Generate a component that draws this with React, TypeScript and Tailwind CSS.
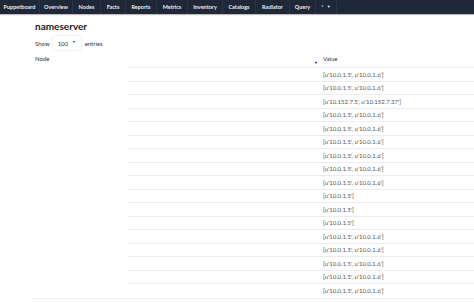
import React from 'react';

const navItems: { label: string; w: string }[] = [
    { label: 'Puppetboard', w: 'w-[40px]' },
    { label: 'Overview', w: 'w-[33px]' },
    { label: 'Nodes', w: 'w-[28px]' },
    { label: 'Facts', w: 'w-[25px]' },
    { label: 'Reports', w: 'w-[31px]' },
    { label: 'Metrics', w: 'w-[31px]' },
    { label: 'Inventory', w: 'w-[35px]' },
    { label: 'Catalogs', w: 'w-[33px]' },
    { label: 'Radiator', w: 'w-[34px]' },
    { label: 'Query', w: 'w-[26px]' },
];

const pair = "[u'10.0.1.5', u'10.0.1.6']";
const single = "[u'10.0.1.5']";

const values: string[] = [
    pair,
    pair,
    "[u'10.152.7.5', u'10.152.7.37']",
    pair,
    pair,
    pair,
    pair,
    pair,
    pair,
    single,
    single,
    single,
    pair,
    pair,
    pair,
    pair,
    pair,
];

export default function App() {
    return (
        <div className="w-[474px] h-[302px] overflow-hidden bg-white font-['Lato','Liberation_Sans',sans-serif]">
            {/* Top menu */}
            <div className="h-[14px] bg-[#1e2838] flex items-stretch shadow-[0_1px_1px_rgba(0,0,0,0.25)]">
                {navItems.map((item) => (
                    <div
                        key={item.label}
                        className={`${item.w} flex items-center justify-center text-[5.5px] font-bold text-[#e8ecf2] border-r border-[#2a3546]`}
                    >
                        {item.label}
                    </div>
                ))}
                <div className="w-[21px] flex items-center justify-center gap-[3px] text-[5.5px] text-[#e8ecf2] border-r border-[#2a3546]">
                    <span>*</span>
                    <span className="text-[4px]">▼</span>
                </div>
            </div>

            <div className="pl-[32px]">
                <h1 className="ml-[3px] mt-[5px] h-[14px] text-[10px] leading-[14px] font-bold text-[#1b1c1d]">nameserver</h1>

                <div className="ml-[3px] mt-[3px] flex items-center gap-[3px] text-[6px] text-[#333]">
                    <span>Show</span>
                    <div className="w-[28px] h-[14px] flex items-center justify-between px-[5px] bg-white rounded-[2px] shadow-[0_0_2px_rgba(0,0,0,0.18)]">
                        <span>100</span>
                        <span className="text-[3.5px]">▼</span>
                    </div>
                    <span className="ml-[1px]">entries</span>
                </div>

                {/* Table */}
                <div className="mt-[3px] border-b border-[#ececec]">
                    <div className="h-[15px] flex text-[6px] text-[#333]">
                        <div className="w-[96px] pl-[3px] pt-[1px]">Node</div>
                        <div className="flex-1 flex border-b border-[#ececec]">
                            <div className="w-[191px] relative">
                                <span className="absolute right-[1px] top-[7px] text-[4px] text-[#222]">▼</span>
                            </div>
                            <div className="pl-[4px] pt-[1px]">Value</div>
                        </div>
                    </div>
                    {values.map((v, i) => (
                        <div key={i} className="h-[13.5px] flex text-[6px] text-[#555]">
                            <div className="w-[96px]" />
                            <div
                                className={`flex-1 flex items-center ${i < values.length - 1 ? 'border-b border-[#ececec]' : ''}`}
                            >
                                <div className="w-[191px]" />
                                <div className="pl-[4px] whitespace-nowrap">{v}</div>
                            </div>
                        </div>
                    ))}
                </div>
            </div>
        </div>
    );
}
